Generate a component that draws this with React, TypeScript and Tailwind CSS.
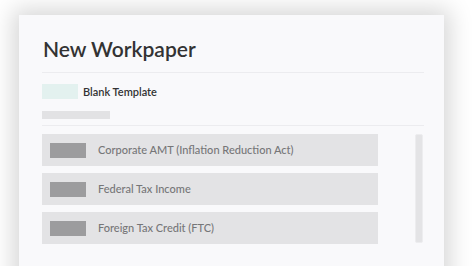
export default function App() {
  const rows = [
    "Corporate AMT (Inflation Reduction Act)",
    "Federal Tax Income",
    "Foreign Tax Credit (FTC)",
  ];

  return (
    <main
      className="h-[266px] w-[474px] overflow-hidden bg-white pt-[15px] pl-[19px]"
      style={{ fontFamily: "Lato, 'Noto Sans', sans-serif" }}
    >
      <section className="h-[280px] w-[425px] bg-[#f9f9fb] pr-[20px] pl-[23px] pt-[22px] shadow-[0_0_22px_6px_rgba(0,0,0,0.16)]">
        <div className="border-b border-[#ececef] pb-[11px] pl-[1px]">
          <h1 className="text-[21px] leading-[24px] font-semibold text-[#333333]">
            New Workpaper
          </h1>
        </div>
        <div className="flex items-center gap-[5px] pt-[11px]">
          <div className="h-[15px] w-[36px] bg-[#e3f1ef]" />
          <span className="text-[11px] leading-[15px] font-semibold text-[#333333]">
            Blank Template
          </span>
        </div>
        <div className="border-b border-[#ececef] pt-[12px] pb-[6px]">
          <div className="h-[8px] w-[68px] bg-[#e2e2e4]" />
        </div>
        <div className="flex pt-[8px]">
          <div className="flex w-[336px] flex-col gap-[7px]">
            {rows.map((row) => (
              <div
                key={row}
                className="flex h-[32px] items-center bg-[#e3e3e5] pl-[8px]"
              >
                <div className="h-[15px] w-[36px] bg-[#9c9c9e]" />
                <span className="ml-[12px] text-[11px] font-medium text-[#767678]">
                  {row}
                </span>
              </div>
            ))}
          </div>
          <div className="ml-[37px] h-[109px] w-[8px] rounded-[2px] border border-[#ededef] bg-[#e4e4e6]" />
        </div>
      </section>
    </main>
  );
}
